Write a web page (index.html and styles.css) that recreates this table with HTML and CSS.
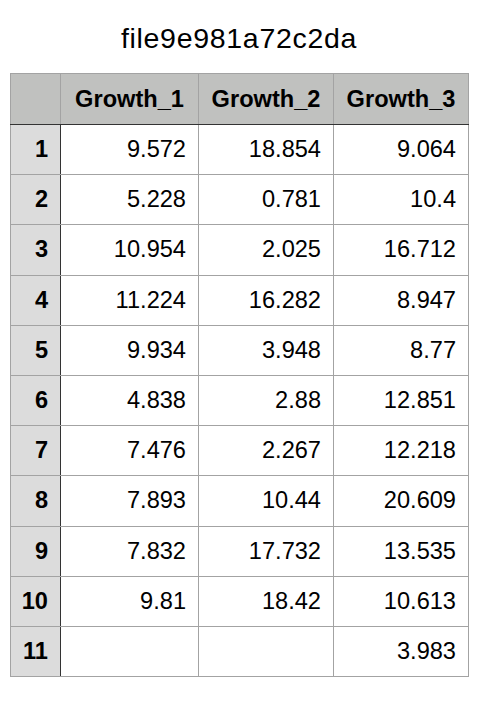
FILE: index.html
```html
<!DOCTYPE html>
<html>
<head>
<meta charset="utf-8">
<link rel="stylesheet" href="styles.css">
</head>
<body>
<div class="page">
  <h1 class="title">file9e981a72c2da</h1>
  <table class="grid">
    <thead>
      <tr><th class="corner"></th><th>Growth_1</th><th>Growth_2</th><th>Growth_3</th></tr>
    </thead>
    <tbody>
      <tr><th>1</th><td>9.572</td><td>18.854</td><td>9.064</td></tr>
      <tr><th>2</th><td>5.228</td><td>0.781</td><td>10.4</td></tr>
      <tr><th>3</th><td>10.954</td><td>2.025</td><td>16.712</td></tr>
      <tr><th>4</th><td>11.224</td><td>16.282</td><td>8.947</td></tr>
      <tr><th>5</th><td>9.934</td><td>3.948</td><td>8.77</td></tr>
      <tr><th>6</th><td>4.838</td><td>2.88</td><td>12.851</td></tr>
      <tr><th>7</th><td>7.476</td><td>2.267</td><td>12.218</td></tr>
      <tr><th>8</th><td>7.893</td><td>10.44</td><td>20.609</td></tr>
      <tr><th>9</th><td>7.832</td><td>17.732</td><td>13.535</td></tr>
      <tr><th>10</th><td>9.81</td><td>18.42</td><td>10.613</td></tr>
      <tr><th>11</th><td></td><td></td><td>3.983</td></tr>
    </tbody>
  </table>
</div>
</body>
</html>
```
FILE: styles.css
```css
html, body {
  margin: 0;
  padding: 0;
  background: #ffffff;
}
.page {
  width: 458px;
  padding: 0 10px;
  font-family: "Liberation Sans", Arial, sans-serif;
  color: #000;
}
.title {
  margin: 0;
  height: 73px;
  display: flex;
  align-items: center;
  justify-content: center;
  font-size: 28.5px;
  letter-spacing: 0.7px;
  font-weight: normal;
  padding-top: 3px;
  box-sizing: border-box;
}
.grid {
  border-collapse: collapse;
  width: 458px;
  table-layout: fixed;
  font-size: 23.6px;
}
.grid th, .grid td {
  border: 1px solid #a3a3a3;
  height: 50.2px;
  padding: 0 12px 0 0;
  text-align: right;
  box-sizing: border-box;
}
.grid thead th {
  background: #c0c1bf;
  font-weight: bold;
  text-align: center;
  padding: 0;
  height: 51px;
  border-bottom: 1px solid #333;
}
.grid thead th:nth-child(1) { width: 50px; }
.grid thead th:nth-child(2) { width: 138px; }
.grid thead th:nth-child(3) { width: 135px; }
.grid thead th:nth-child(4) { width: 135px; }
.grid tbody th {
  background: #dcdcdc;
  font-weight: bold;
  border-right: 1px solid #333;
}
.grid thead th.corner {
  border-right: 1px solid #a3a3a3;
}
```
